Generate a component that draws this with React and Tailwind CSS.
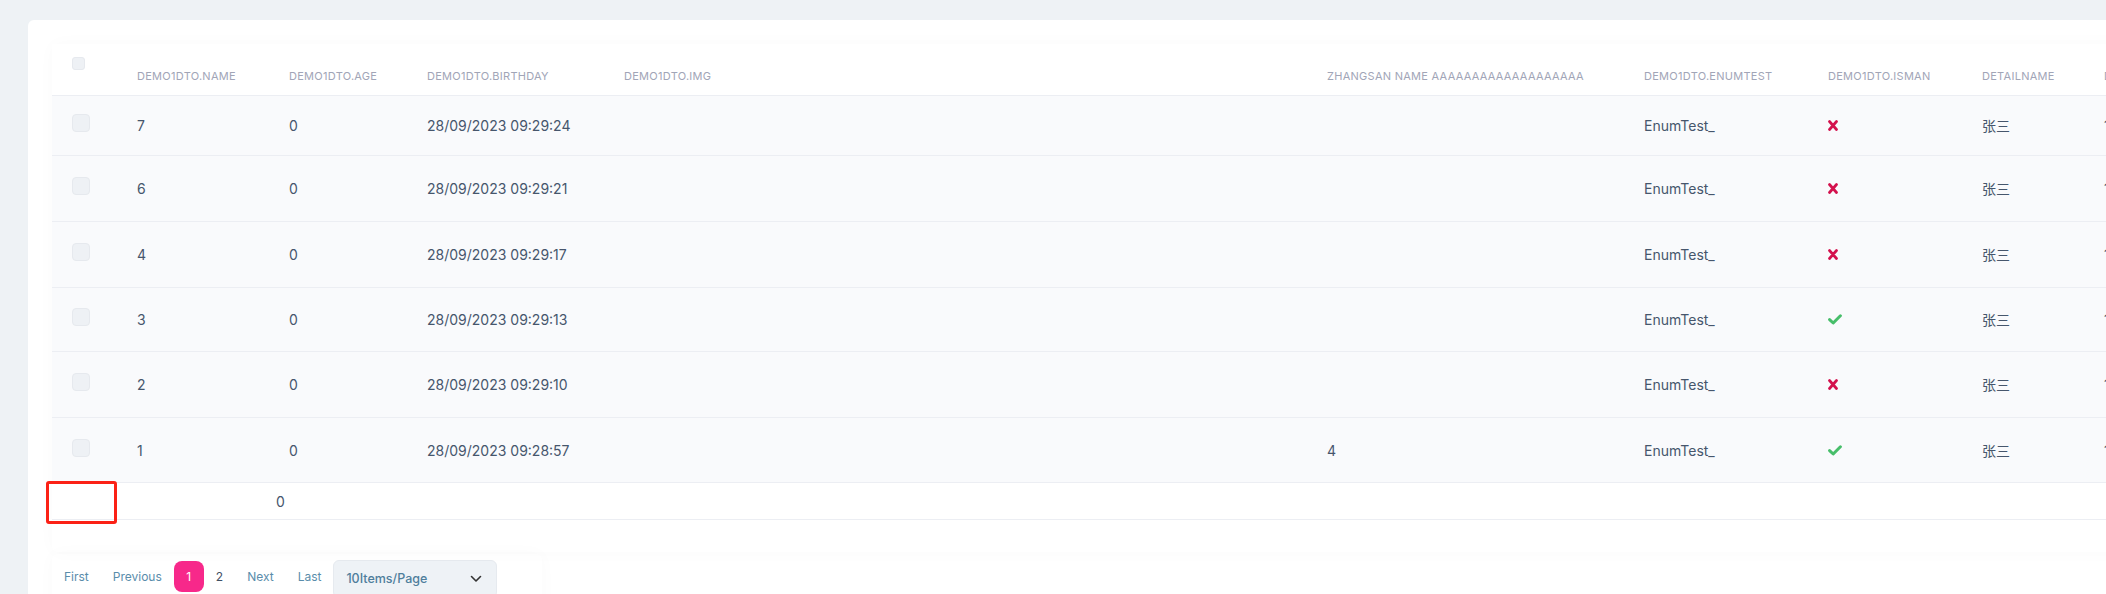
import React from "react";

const cols = "grid grid-cols-[85px_152px_138px_197px_703px_317px_184px_154px_122px_200px]";

const headers = [
  "DEMO1DTO.NAME",
  "DEMO1DTO.AGE",
  "DEMO1DTO.BIRTHDAY",
  "DEMO1DTO.IMG",
  "ZHANGSAN NAME AAAAAAAAAAAAAAAAAAA",
  "DEMO1DTO.ENUMTEST",
  "DEMO1DTO.ISMAN",
  "DETAILNAME",
  "DEMO1DTO.REMARK",
];

const rows = [
  { h: "h-[60px]", name: "7", time: "28/09/2023 09:29:24", z: "", man: false },
  { h: "h-[66px]", name: "6", time: "28/09/2023 09:29:21", z: "", man: false },
  { h: "h-[66px]", name: "4", time: "28/09/2023 09:29:17", z: "", man: false },
  { h: "h-[64px]", name: "3", time: "28/09/2023 09:29:13", z: "", man: true },
  { h: "h-[66px]", name: "2", time: "28/09/2023 09:29:10", z: "", man: false },
  { h: "h-[65px]", name: "1", time: "28/09/2023 09:28:57", z: "4", man: true },
];

function Cross() {
  return (
    <svg width="10" height="11" viewBox="0 0 10 11" className="block">
      <path d="M1.5 1.5 L8.5 9.5 M8.5 1.5 L1.5 9.5" stroke="#d3114d" strokeWidth="2.7" strokeLinecap="round" fill="none" />
    </svg>
  );
}

function Check() {
  return (
    <svg width="14" height="11" viewBox="0 0 14 11" className="block">
      <path d="M1.6 5.6 L5.2 9 L12.4 1.8" stroke="#47be6a" strokeWidth="3" strokeLinecap="round" strokeLinejoin="round" fill="none" />
    </svg>
  );
}

export default function App() {
  return (
    <div
      className="w-[2106px] h-[594px] overflow-hidden bg-[#eef2f5] pl-[28px] pt-[20px]"
      style={{ fontFamily: "Inter, 'Noto Sans CJK SC', sans-serif" }}
    >
      <div className="w-[2300px] h-[700px] bg-white rounded-tl-md pl-[24px] pt-[24px]">
        {/* table */}
        <div className="relative w-[2240px] pb-[32px] shadow-[0_0_18px_rgba(40,60,90,0.025)] rounded-md">
          {/* header */}
          <div className={`${cols} h-[52px] bg-white border-b border-[#eceef3]`}>
            <div className="pl-[20px] pt-[13px]">
              <div className="w-[13px] h-[13px] rounded-[3px] bg-[#eef1f5] border border-[#e6e9ee]" />
            </div>
            {headers.map((h) => (
              <div key={h} className="flex items-end pb-[12px] text-[11px] leading-[14px] tracking-[0.025em] text-[#a1a5b7] uppercase whitespace-nowrap overflow-hidden">
                {h}
              </div>
            ))}
          </div>
          {/* rows */}
          {rows.map((r) => (
            <div key={r.name} className={`${cols} ${r.h} items-center bg-[#f9fafc] border-b border-[#eceef3] text-[14px] text-[#46566c]`}>
              <div className="pl-[20px] -mt-[5px]">
                <div className="w-[18px] h-[18px] rounded-[4px] bg-[#eef1f5] border border-[#e6e9ee]" />
              </div>
              <div>{r.name}</div>
              <div>0</div>
              <div>{r.time}</div>
              <div></div>
              <div>{r.z}</div>
              <div>EnumTest_</div>
              <div>{r.man ? <Check /> : <Cross />}</div>
              <div>张三</div>
              <div className="whitespace-nowrap">1</div>
            </div>
          ))}
          {/* footer summary row */}
          <div className="relative h-[37px] flex items-center bg-white border-b border-[#eceef3] text-[14px] text-[#46566c]">
            <div className="pl-[224px]">0</div>
            <div className="absolute left-[-6px] top-[-2px] w-[71px] h-[43px] border-[3px] border-[#fb2116] rounded-[3px]" />
          </div>
        </div>
        {/* pagination */}
        <div className="mt-[2px] w-[490px] h-[60px] pt-[7px] flex items-start shadow-[0_0_18px_rgba(40,60,90,0.025)] rounded-md text-[12px]">
          <a className="px-3 h-[31px] flex items-center text-[#5a8dab]">First</a>
          <a className="px-3 h-[31px] flex items-center text-[#5a8dab]">Previous</a>
          <a className="w-[30px] h-[31px] flex items-center justify-center rounded-lg bg-[#f7288a] text-white">1</a>
          <a className="px-3 h-[31px] flex items-center text-[#3f4f63]">2</a>
          <a className="px-3 h-[31px] flex items-center text-[#5a8dab]">Next</a>
          <a className="px-3 h-[31px] flex items-center text-[#5a8dab]">Last</a>
          <div className="w-[164px] h-[38px] rounded-md bg-[#eef2f6] border border-[#e6eaef] flex items-center justify-between pl-[12px] pr-[14px] -mt-[1px]">
            <span className="font-medium text-[12.5px] text-[#4f7e9c]">10Items/Page</span>
            <svg width="12" height="8" viewBox="0 0 12 8">
              <path d="M1.5 1.5 L6 6 L10.5 1.5" stroke="#333" strokeWidth="1.6" fill="none" strokeLinecap="round" strokeLinejoin="round" />
            </svg>
          </div>
        </div>
      </div>
    </div>
  );
}
